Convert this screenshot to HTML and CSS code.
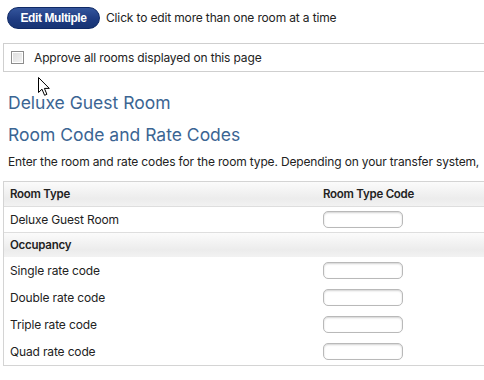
FILE: index.html
```html
<!DOCTYPE html>
<html>
<head>
<meta charset="utf-8">
<link rel="stylesheet" href="styles.css">
</head>
<body>
<div class="topbar">
  <button class="btn-edit">Edit Multiple</button>
  <span class="hint">Click to edit more than one room at a time</span>
</div>
<div class="approve">
  <span class="check"></span>
  <span class="approve-label">Approve all rooms displayed on this page</span>
</div>
<h2 class="title">Deluxe Guest Room</h2>
<h2 class="title second">Room Code and Rate Codes</h2>
<p class="intro">Enter the room and rate codes for the room type. Depending on your transfer system,</p>
<div class="codes">
  <div class="row head"><span class="c1">Room Type</span><span class="c2">Room Type Code</span></div>
  <div class="row first"><span class="c1">Deluxe Guest Room</span><span class="c2"><input class="code" type="text"></span></div>
  <div class="row head sub"><span class="c1">Occupancy</span><span class="c2"></span></div>
  <div class="row rate"><span class="c1">Single rate code</span><span class="c2"><input class="code" type="text"></span></div>
  <div class="row rate"><span class="c1">Double rate code</span><span class="c2"><input class="code" type="text"></span></div>
  <div class="row rate"><span class="c1">Triple rate code</span><span class="c2"><input class="code" type="text"></span></div>
  <div class="row rate"><span class="c1">Quad rate code</span><span class="c2"><input class="code" type="text"></span></div>
</div>
<svg class="cursor" width="13" height="20" viewBox="0 0 13 20"><path d="M0.5 0.5 L0.5 15.5 L4 12.2 L6.6 18.3 L8.9 17.3 L6.4 11.4 L11.3 11.4 Z" fill="#fff" stroke="#000" stroke-width="1" stroke-linejoin="miter"/></svg>
</body>
</html>
```

FILE: styles.css
```css
html, body {
  margin: 0;
  padding: 0;
  background: #fff;
  overflow: hidden;
}
body {
  font-family: Inter, "Noto Sans", sans-serif;
  font-size: 12px;
  letter-spacing: -0.15px;
  color: #222;
  width: 484px;
  height: 380px;
  position: relative;
}
.topbar {
  display: flex;
  align-items: center;
  gap: 6px;
  padding: 7px 0 0 7px;
  height: 22px;
}
.btn-edit {
  height: 22px;
  width: 93px;
  padding: 0;
  border: 1px solid #0f2a66;
  border-radius: 11px;
  background: linear-gradient(#34559c, #1f3c82 55%, #173473);
  color: #fff;
  font-family: "Liberation Sans", Arial, sans-serif;
  font-weight: bold;
  font-size: 12px;
  letter-spacing: -0.4px;
}
.hint {
  line-height: 16px;
}
.approve {
  margin: 14px 0 0 3px;
  height: 27px;
  border: 1px solid #cfcfcf;
  border-right: none;
  display: flex;
  align-items: center;
  gap: 10px;
  padding-left: 7px;
}
.check {
  width: 11px;
  height: 11px;
  border: 1px solid #8d8d8d;
  background: linear-gradient(135deg, #dcdcdc, #f4f4f4);
  box-shadow: inset 0 0 0 1px #fff;
}
.approve-label {
  line-height: 16px;
}
.title {
  margin: 21px 0 0 8px;
  font-size: 17.5px;
  line-height: 20px;
  letter-spacing: 0;
  font-weight: normal;
  color: #3b6593;
}
.title.second {
  margin-top: 12px;
}
.intro {
  margin: 9px 0 0 8px;
  line-height: 16px;
  white-space: nowrap;
}
.codes {
  margin: 11px 0 0 3px;
  width: 560px;
  border: 1px solid #d4d4d4;
  border-right: none;
}
.row {
  display: grid;
  grid-template-columns: 318px 1fr;
  align-items: center;
  height: 25px;
  border-top: 1px solid #dedede;
}
.row:first-child {
  border-top: none;
  height: 24px;
}
.row.head {
  font-weight: 600;
  font-size: 11.5px;
  letter-spacing: -0.25px;
  background: linear-gradient(#fbfbfb, #ececec 70%, #f2f2f2);
}
.row.sub {
  height: 24px;
}
.row.rate {
  border-top: none;
  height: 27px;
}
.c1 {
  padding-left: 6px;
}
.c2 {
  padding-left: 1px;
  display: flex;
  align-items: center;
}
.code {
  box-sizing: border-box;
  width: 80px;
  height: 17px;
  margin: 0;
  border: 1px solid #b9b9b9;
  border-radius: 5px;
  background: #fff;
  box-shadow: inset 0 1px 2px rgba(0,0,0,0.18);
}
.cursor {
  position: absolute;
  left: 38px;
  top: 77px;
}
```
